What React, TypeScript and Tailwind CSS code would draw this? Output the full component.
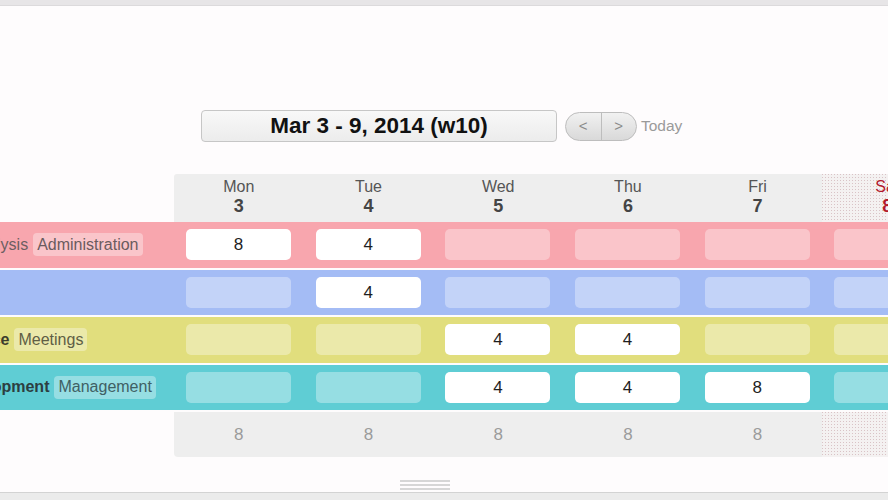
import React from "react";

type Row = {
  label: string;
  bold: boolean;
  tag?: string;
  rowBg: string;
  labelColor: string;
  tagColor: string;
  values: (number | null)[];
};

const rows: Row[] = [
  {
    label: "UI Analysis",
    bold: false,
    tag: "Administration",
    rowBg: "bg-[#f8a6ae]",
    labelColor: "text-[#6d5e61]",
    tagColor: "text-[#6a5b5e]",
    values: [8, 4, null, null, null, null, null],
  },
  {
    label: "",
    bold: false,
    rowBg: "bg-[#a4bcf5]",
    labelColor: "text-[#4a5570]",
    tagColor: "text-[#4a5570]",
    values: [null, 4, null, null, null, null, null],
  },
  {
    label: "Finance",
    bold: true,
    tag: "Meetings",
    rowBg: "bg-[#e1de7d]",
    labelColor: "text-[#3c3c2c]",
    tagColor: "text-[#5f5e45]",
    values: [null, null, 4, 4, null, null, null],
  },
  {
    label: "Development",
    bold: true,
    tag: "Management",
    rowBg: "bg-[#5fcdd4]",
    labelColor: "text-[#2c3e41]",
    tagColor: "text-[#3f6064]",
    values: [null, null, 4, 4, 8, null, null],
  },
];

const days = [
  { name: "Mon", num: 3, weekend: false },
  { name: "Tue", num: 4, weekend: false },
  { name: "Wed", num: 5, weekend: false },
  { name: "Thu", num: 6, weekend: false },
  { name: "Fri", num: 7, weekend: false },
  { name: "Sat", num: 8, weekend: true },
  { name: "Sun", num: 9, weekend: true },
];

const totals: (number | null)[] = [8, 8, 8, 8, 8, null, null];

const dotted =
  "bg-[#d9c3c6] bg-[conic-gradient(at_1px_1px,#f4f1f1_270deg,#d9c3c6_0)] bg-[length:3px_3px]";

export default function App() {
  return (
    <div className="w-[888px] h-[500px] overflow-hidden bg-[#fefcfd] flex flex-col font-['Liberation_Sans',Arial,sans-serif]">
      <div className="h-[6px] shrink-0 bg-[#e7e5e7] border-b border-[#dcdadc]" />

      {/* toolbar */}
      <div className="mt-[104px] flex items-center pl-[201px] shrink-0">
        <div className="w-[356px] h-[32px] rounded-[4px] border border-[#c6c6c6] bg-gradient-to-b from-[#f8f8f8] to-[#ececec] flex items-center justify-center">
          <span className="text-[22.5px] font-bold text-[#111] leading-none">
            Mar 3 - 9, 2014 (w10)
          </span>
        </div>
        <div className="ml-[8px] w-[72px] h-[29px] rounded-full border border-[#bdbdbd] bg-gradient-to-b from-[#f1f1f1] to-[#d9d9d9] flex overflow-hidden">
          <div className="flex-1 flex items-center justify-center text-[15px] text-[#8a8a8a] border-r border-[#bdbdbd]">
            &lt;
          </div>
          <div className="flex-1 flex items-center justify-center text-[15px] text-[#8a8a8a]">
            &gt;
          </div>
        </div>
        <span className="ml-[4px] text-[15.5px] text-[#9a9a9a]">Today</span>
      </div>

      {/* grid */}
      <div className="mt-[32px] ml-[-58px] flex flex-col shrink-0">
        {/* header */}
        <div className="flex h-[48px]">
          <div className="w-[232px] shrink-0" />
          {days.map((d, i) => (
            <div
              key={d.name}
              className={`w-[129.7px] shrink-0 flex flex-col items-center pt-[4px] ${
                d.weekend ? dotted : "bg-[#eeeeee]"
              } ${i === 0 ? "rounded-tl-[3px]" : ""}`}
            >
              <span
                className={`text-[16px] leading-[18px] ${
                  d.weekend ? "text-[#b3182c]" : "text-[#555]"
                }`}
              >
                {d.name}
              </span>
              <span
                className={`text-[18px] leading-[20px] font-bold ${
                  d.weekend ? "text-[#b3182c]" : "text-[#444]"
                }`}
              >
                {d.num}
              </span>
            </div>
          ))}
        </div>

        {/* rows */}
        <div className="flex flex-col gap-[2px]">
          {rows.map((r, ri) => (
            <div key={ri} className={`flex h-[45.5px] ${r.rowBg}`}>
              <div className="w-[232px] shrink-0 flex items-center pl-[7px] gap-[5px] whitespace-nowrap">
                {r.label && (
                  <span
                    className={`text-[16px] ${r.bold ? "font-bold" : ""} ${r.labelColor}`}
                  >
                    {r.label}
                  </span>
                )}
                {r.tag && (
                  <span
                    className={`h-[23px] flex items-center px-[4px] rounded-[4px] bg-white/35 text-[16px] ${r.tagColor}`}
                  >
                    {r.tag}
                  </span>
                )}
              </div>
              {r.values.map((v, ci) => (
                <div
                  key={ci}
                  className="w-[129.7px] shrink-0 flex items-center pl-[12px]"
                >
                  <div
                    className={`w-[105px] h-[31px] shrink-0 rounded-[5px] flex items-center justify-center text-[17px] text-[#1e1e1e] ${
                      v !== null ? "bg-white" : "bg-white/35"
                    }`}
                  >
                    {v !== null ? v : ""}
                  </div>
                </div>
              ))}
            </div>
          ))}
        </div>

        {/* totals */}
        <div className="flex h-[45px] mt-[2px]">
          <div className="w-[232px] shrink-0" />
          {totals.map((t, i) => (
            <div
              key={i}
              className={`w-[129.7px] shrink-0 flex items-center justify-center text-[17px] text-[#9b9b9b] ${
                days[i].weekend ? dotted : "bg-[#eeeeee]"
              } ${i === 0 ? "rounded-bl-[4px]" : ""}`}
            >
              {t !== null ? t : ""}
            </div>
          ))}
        </div>
      </div>

      {/* resize handle */}
      <div className="mt-[23px] ml-[400px] w-[50px] flex flex-col gap-[2px] shrink-0">
        <div className="h-[2px] bg-[#d6d6d6]" />
        <div className="h-[2px] bg-[#d6d6d6]" />
        <div className="h-[2px] bg-[#d6d6d6]" />
      </div>

      <div className="mt-[2px] flex-1 border-t border-[#d3d3d3] bg-[#ebebeb]" />
    </div>
  );
}
